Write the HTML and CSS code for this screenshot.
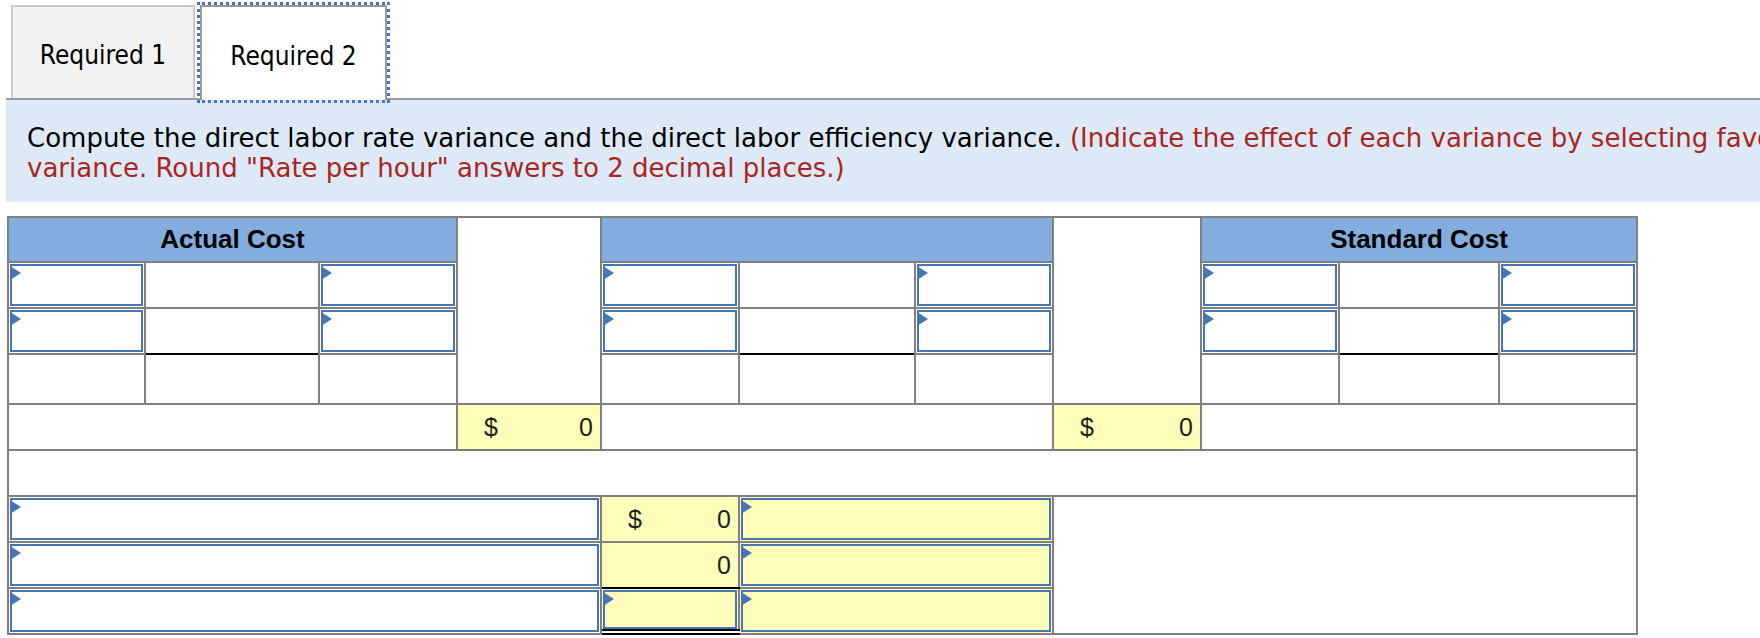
FILE: index.html
```html
<!DOCTYPE html>
<html lang="en">
<head>
<meta charset="utf-8">
<title>Required 2</title>
<link rel="stylesheet" href="styles.css">
</head>
<body>
<div class="tabbar">
  <div class="tab tab-off">Required 1</div>
  <div class="tab tab-on">Required 2</div>
</div>
<div class="prompt">Compute the direct labor rate variance and the direct labor efficiency variance. <span class="red">(Indicate the effect of each variance by selecting favorable, unfavorable, or no</span><br><span class="red">variance. Round "Rate per hour" answers to 2 decimal places.)</span></div>

<div class="grid">
  <!-- row 0 -->
  <div class="cell hdr span3">Actual Cost</div>
  <div class="cell rspan4"></div>
  <div class="cell hdr span3"></div>
  <div class="cell rspan4"></div>
  <div class="cell hdr span3">Standard Cost</div>

  <!-- row 1 -->
  <div class="cell in"><div class="box"><span class="tri"></span></div></div>
  <div class="cell"></div>
  <div class="cell in"><div class="box"><span class="tri"></span></div></div>
  <div class="cell in"><div class="box"><span class="tri"></span></div></div>
  <div class="cell"></div>
  <div class="cell in"><div class="box"><span class="tri"></span></div></div>
  <div class="cell in"><div class="box"><span class="tri"></span></div></div>
  <div class="cell"></div>
  <div class="cell in"><div class="box"><span class="tri"></span></div></div>

  <!-- row 2 -->
  <div class="cell in"><div class="box"><span class="tri"></span></div></div>
  <div class="cell ul"></div>
  <div class="cell in"><div class="box"><span class="tri"></span></div></div>
  <div class="cell in"><div class="box"><span class="tri"></span></div></div>
  <div class="cell ul"></div>
  <div class="cell in"><div class="box"><span class="tri"></span></div></div>
  <div class="cell in"><div class="box"><span class="tri"></span></div></div>
  <div class="cell ul"></div>
  <div class="cell in"><div class="box"><span class="tri"></span></div></div>

  <!-- row 3 -->
  <div class="cell"></div>
  <div class="cell"></div>
  <div class="cell"></div>
  <div class="cell"></div>
  <div class="cell"></div>
  <div class="cell"></div>
  <div class="cell"></div>
  <div class="cell"></div>
  <div class="cell"></div>

  <!-- row 4 -->
  <div class="cell span3"></div>
  <div class="cell yel money"><span>$</span><span>0</span></div>
  <div class="cell span3"></div>
  <div class="cell yel money"><span>$</span><span>0</span></div>
  <div class="cell span3"></div>

  <!-- row 5 -->
  <div class="cell span11"></div>

  <!-- row 6 -->
  <div class="cell in span4"><div class="box"><span class="tri"></span></div></div>
  <div class="cell yel money"><span>$</span><span>0</span></div>
  <div class="cell yel in span2"><div class="box"><span class="tri"></span></div></div>
  <div class="cell span4 rspan3"></div>

  <!-- row 7 -->
  <div class="cell in span4"><div class="box"><span class="tri"></span></div></div>
  <div class="cell yel money only ul ul-wide"><span>0</span></div>
  <div class="cell yel in span2"><div class="box"><span class="tri"></span></div></div>

  <!-- row 8 -->
  <div class="cell in span4"><div class="box"><span class="tri"></span></div></div>
  <div class="cell yel in dbl"><div class="box"><span class="tri"></span></div></div>
  <div class="cell yel in span2"><div class="box"><span class="tri"></span></div></div>
</div>
</body>
</html>
```

FILE: styles.css
```css
html, body {
  margin: 0;
  padding: 0;
  background: #ffffff;
  overflow: hidden;
}

body {
  font-family: "DejaVu Sans", Verdana, sans-serif;
  color: #000;
}

/* ---------- tabs ---------- */
.tabbar {
  display: flex;
  align-items: flex-end;
  gap: 5px;
  height: 93px;
  margin-left: 6px;
  padding: 5px 0 0 5px;
  border-bottom: 2px solid #9a9a9a;
}

.tab {
  box-sizing: border-box;
  display: flex;
  align-items: center;
  justify-content: center;
  padding-top: 5px;
  font-family: "DejaVu Sans Condensed", "DejaVu Sans", sans-serif;
  font-stretch: condensed;
  font-size: 26px;
  color: #000;
}

.tab-off {
  width: 184px;
  height: 93px;
  background: #f2f2f2;
  border: 2px solid #c9c9c9;
  border-bottom: 0;
}

.tab-on {
  position: relative;
  width: 187px;
  height: 95px;
  margin-bottom: -2px;
  background: #ffffff;
  border: 2px solid #9a9a9a;
  border-bottom: 0;
  outline: 3px dotted #4475c4;
  outline-offset: 0;
}

/* ---------- prompt ---------- */
.prompt {
  margin-left: 6px;
  background: #dee9f7;
  padding: 23px 0 19px 21px;
  font-size: 26px;
  line-height: 30px;
  white-space: nowrap;
  overflow: hidden;
}

.red {
  color: #a8261f;
}

/* ---------- grid table ---------- */
.grid {
  display: grid;
  grid-template-columns: 135px 172px 136px 142px 136px 174px 136px 146px 136px 158px 136px;
  grid-template-rows: 43px 44px 44px 48px 44px 44px 44px 44px 44px;
  gap: 2px;
  padding: 2px;
  width: max-content;
  margin: 14px 0 0 7px;
  background: #808080;
  font-family: "Liberation Sans", Arial, sans-serif;
}

.cell {
  position: relative;
  box-sizing: border-box;
  background: #ffffff;
}

.span2 { grid-column: span 2; }
.span3 { grid-column: span 3; }
.span4 { grid-column: span 4; }
.span11 { grid-column: span 11; }
.rspan3 { grid-row: span 3; }
.rspan4 { grid-row: span 4; }

.hdr {
  background: #83acdf;
  display: flex;
  align-items: center;
  justify-content: center;
  font-weight: bold;
  font-size: 26px;
  color: #000;
}

.yel {
  background: #fffdb9;
}

.money {
  display: flex;
  align-items: center;
  justify-content: space-between;
  padding: 0 7px 0 26px;
  font-size: 25px;
  color: #1e1e1e;
}

.money.only {
  justify-content: flex-end;
}

.in {
  padding: 1px;
}

.box {
  position: relative;
  box-sizing: border-box;
  height: 100%;
  border: 2px solid #4776b6;
}

.tri {
  position: absolute;
  left: -2px;
  top: 0;
  width: 0;
  height: 0;
  border-left: 11px solid #4776b6;
  border-top: 7px solid transparent;
  border-bottom: 7px solid transparent;
}

.ul::after {
  content: "";
  position: absolute;
  left: 0;
  right: 0;
  bottom: -2px;
  height: 2px;
  background: #000;
}

.ul-wide::after {
  right: -2px;
}

.dbl {
  padding-bottom: 4px;
}

.dbl::after {
  content: "";
  position: absolute;
  left: 0;
  right: -2px;
  bottom: -2px;
  height: 6px;
  box-sizing: border-box;
  border-top: 2px solid #000;
  border-bottom: 2px solid #000;
  background: #ffffff;
}
```
